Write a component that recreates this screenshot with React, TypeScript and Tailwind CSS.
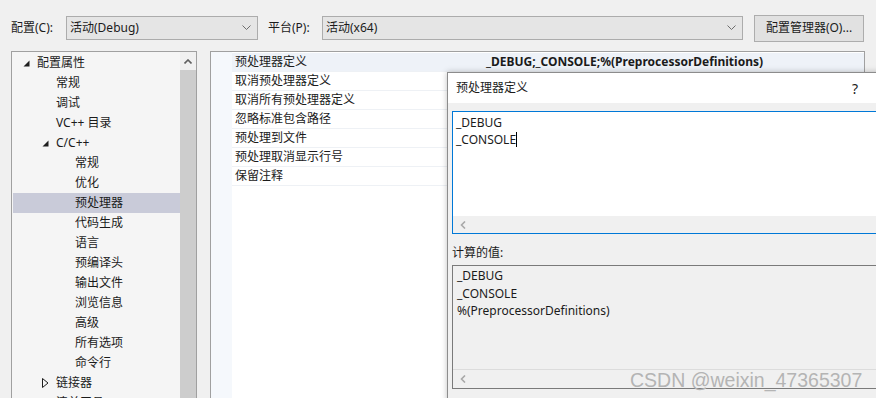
import React from 'react';

const font = "font-['Noto_Sans','Noto_Sans_CJK_SC',sans-serif]";

const Chevron = () => (
  <svg width="9" height="6" viewBox="0 0 9 6" className="shrink-0">
    <path d="M0.5 0.5 L4.5 4.5 L8.5 0.5" fill="none" stroke="#6d6d6d" strokeWidth="1" />
  </svg>
);

const Expanded = () => (
  <svg width="7" height="7" viewBox="0 0 7 7">
    <path d="M6.5 0.5 L6.5 6.5 L0.5 6.5 Z" fill="#1e1e1e" />
  </svg>
);

const Collapsed = () => (
  <svg width="7" height="10" viewBox="0 0 7 10">
    <path d="M0.5 0.5 L6 5 L0.5 9.5 Z" fill="none" stroke="#1e1e1e" strokeWidth="1" />
  </svg>
);

const LeftArrow = () => (
  <svg width="6" height="8" viewBox="0 0 6 8">
    <path d="M5 0.5 L1.5 4 L5 7.5" fill="none" stroke="#a8a8a8" strokeWidth="1.6" />
  </svg>
);

type Node = { label: string; level: number; icon?: 'open' | 'closed'; selected?: boolean };

const tree: Node[] = [
  { label: '配置属性', level: 0, icon: 'open' },
  { label: '常规', level: 1 },
  { label: '调试', level: 1 },
  { label: 'VC++ 目录', level: 1 },
  { label: 'C/C++', level: 1, icon: 'open' },
  { label: '常规', level: 2 },
  { label: '优化', level: 2 },
  { label: '预处理器', level: 2, selected: true },
  { label: '代码生成', level: 2 },
  { label: '语言', level: 2 },
  { label: '预编译头', level: 2 },
  { label: '输出文件', level: 2 },
  { label: '浏览信息', level: 2 },
  { label: '高级', level: 2 },
  { label: '所有选项', level: 2 },
  { label: '命令行', level: 2 },
  { label: '链接器', level: 1, icon: 'closed' },
  { label: '清单工具', level: 1, icon: 'closed' },
];

const props = [
  '预处理器定义',
  '取消预处理器定义',
  '取消所有预处理器定义',
  '忽略标准包含路径',
  '预处理到文件',
  '预处理取消显示行号',
  '保留注释',
];

const indent = ['pl-[10px]', 'pl-[29px]', 'pl-[48px]'];

export default function App() {
  return (
    <div className={`relative w-[876px] h-[398px] overflow-hidden bg-[#f0f0f0] text-[12px] text-[#1b1b1b] ${font}`}>
      {/* toolbar */}
      <div className="flex items-center h-[24px] mt-[16px] pl-[11px]">
        <span className="w-[55px]">配置(C):</span>
        <div className="flex items-center justify-between w-[192px] h-[24px] border border-[#acacac] bg-[#e5e5e5] pl-[3px] pr-[6px]">
          <span>活动(Debug)</span>
          <Chevron />
        </div>
        <span className="w-[54px] ml-[10px]">平台(P):</span>
        <div className="flex items-center justify-between w-[421px] h-[24px] border border-[#acacac] bg-[#e5e5e5] pl-[3px] pr-[6px]">
          <span>活动(x64)</span>
          <Chevron />
        </div>
        <div className="flex items-center justify-center w-[110px] h-[27px] ml-[11px] border border-[#adadad] bg-[#e1e1e1]">
          配置管理器(O)...
        </div>
      </div>

      <div className="flex mt-[11px] pl-[11px] h-[400px]">
        {/* tree */}
        <div className="flex w-[186px] border border-[#a0a0a0] bg-[#f5f5f5]">
          <div className="flex-1 pl-[1px] pt-[1px]">
            {tree.map((n, i) => (
              <div
                key={i}
                className={`flex items-center h-[20px] ${indent[n.level]} ${n.selected ? 'bg-[#c9cbd9]' : ''}`}
              >
                <span className="w-[14px] flex items-center">
                  {n.icon === 'open' && <Expanded />}
                  {n.icon === 'closed' && <Collapsed />}
                </span>
                <span className="whitespace-nowrap">{n.label}</span>
              </div>
            ))}
          </div>
          <div className="flex flex-col w-[16px] bg-[#f0f0f0]">
            <div className="flex items-center justify-center h-[18px]">
              <svg width="8" height="5" viewBox="0 0 8 5">
                <path d="M0.5 4.5 L4 1 L7.5 4.5" fill="none" stroke="#606060" strokeWidth="1.6" />
              </svg>
            </div>
            <div className="flex-1 bg-[#cdcdcd]" />
          </div>
        </div>

        {/* property grid */}
        <div className="flex ml-[13px] w-[655px] border border-[#a0a0a0] bg-white">
          <div className="w-[21px] bg-[#f5f8fc]" />
          <div className="flex-1 pt-[1px]">
            {props.map((p, i) => (
              <div
                key={p}
                className={`flex items-center h-[19px] border-b border-[#eef1f5] ${i === 0 ? 'bg-[#eef2f8]' : ''}`}
              >
                <span className="w-[254px] pl-[3px] whitespace-nowrap">{p}</span>
                {i === 0 && (
                  <span className="font-bold whitespace-nowrap">_DEBUG;_CONSOLE;%(PreprocessorDefinitions)</span>
                )}
              </div>
            ))}
          </div>
        </div>
      </div>

      {/* dialog */}
      <div className="absolute left-[447px] top-[72px] w-[440px] h-[340px] border border-[#8c8c8c] bg-[#f0f0f0] shadow-[0_0_6px_rgba(0,0,0,0.25)]">
        <div className="flex items-center justify-between h-[30px] bg-white pl-[8px]">
          <span>预处理器定义</span>
          <span className="mr-[28px] text-[14px]">?</span>
        </div>
        <div className="pt-[8px] pl-[4px]">
          <div className="flex flex-col h-[123px] border border-[#0078d7] bg-white">
            <div className="flex-1 pl-[3px] pt-[2px] leading-[17px]">
              <div>_DEBUG</div>
              <div className="flex items-center">
                _CONSOLE<span className="inline-block w-[1px] h-[15px] bg-black" />
              </div>
            </div>
            <div className="flex items-center h-[17px] bg-[#f0f0f0] pl-[7px]">
              <LeftArrow />
            </div>
          </div>
          <div className="h-[31px] flex items-center pt-[7px]">计算的值:</div>
          <div className="flex flex-col h-[124px] border border-[#7a7a7a] bg-[#f0f0f0]">
            <div className="flex-1 pl-[4px] pt-[1px] leading-[17.5px]">
              <div>_DEBUG</div>
              <div>_CONSOLE</div>
              <div>%(PreprocessorDefinitions)</div>
            </div>
            <div className="flex items-center h-[19px] border-t border-[#dcdcdc] pl-[7px]">
              <LeftArrow />
            </div>
          </div>
        </div>
      </div>

      <div className="absolute left-[630px] top-[368px] text-[19.5px] leading-[24px] text-[#b4b4b4] font-['Liberation_Sans',sans-serif] whitespace-nowrap">
        CSDN @weixin_47365307
      </div>
    </div>
  );
}
